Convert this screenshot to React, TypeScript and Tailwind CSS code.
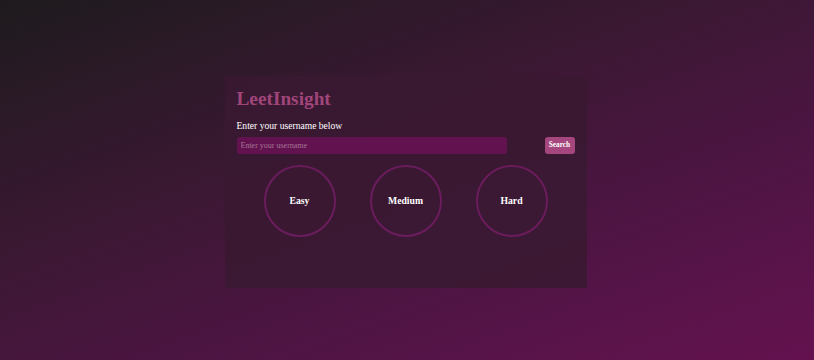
import React from 'react';

const levels = ['Easy', 'Medium', 'Hard'];

const App: React.FC = () => {
  return (
    <div className="w-[814px] h-[360px] flex items-start justify-center pt-[76px] pr-[3px] bg-[linear-gradient(160deg,#1e1b1e_0%,#3a1832_38%,#4c1542_65%,#64124f_100%)] font-['Liberation_Serif','Times_New_Roman',serif]">
      <div className="w-[362px] h-[212px] bg-[#3a1832]/90 px-3 pt-[10px] flex flex-col">
        <h1 className="text-[19.3px] font-bold text-[#a0457a] leading-[25px]">LeetInsight</h1>
        <p className="text-[9.6px] text-white mt-[8px] leading-[14px]">Enter your username below</p>
        <div className="flex items-center justify-between mt-[4px]">
          <input
            className="w-[270px] h-[17px] bg-[#62134f] rounded-[3px] px-1 text-[8px] text-white placeholder:text-[#a67596] outline-none font-['Liberation_Serif',serif]"
            placeholder="Enter your username"
          />
          <button className="w-[30px] h-[17px] bg-[#a6467e] rounded-[3px] text-[7.3px] font-bold text-white font-['Liberation_Serif',serif]">
            Search
          </button>
        </div>
        <div className="flex justify-center gap-[34px] mt-[11px]">
          {levels.map((l) => (
            <div
              key={l}
              className="w-[72px] h-[72px] rounded-full border-[2px] border-[#6a1c5d] flex items-center justify-center"
            >
              <span className="text-[9.7px] font-bold text-white">{l}</span>
            </div>
          ))}
        </div>
      </div>
    </div>
  );
};

export default App;
